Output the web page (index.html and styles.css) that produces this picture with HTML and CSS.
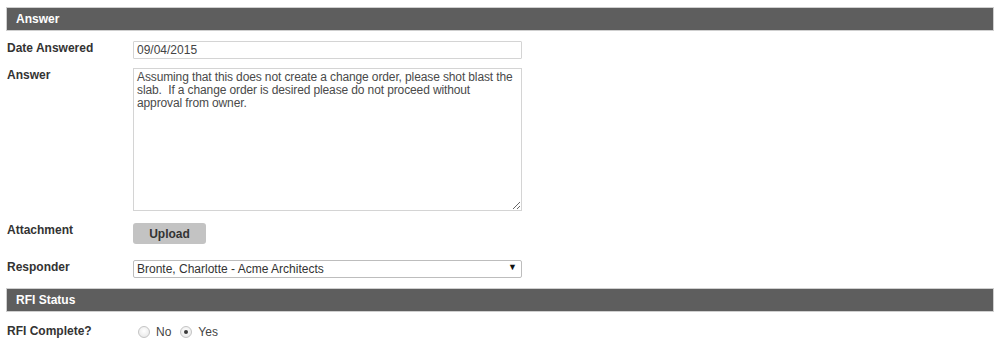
FILE: index.html
```html
<!DOCTYPE html>
<html>
<head>
<meta charset="utf-8">
<link rel="stylesheet" href="styles.css">
</head>
<body>
<div class="page">
  <div class="section-bar">Answer</div>
  <div class="row row-date">
    <label class="lbl">Date Answered</label>
    <input class="field text-input" type="text" value="09/04/2015">
  </div>
  <div class="row row-answer">
    <label class="lbl">Answer</label>
    <textarea class="field answer-box">Assuming that this does not create a change order, please shot blast the slab.  If a change order is desired please do not proceed without approval from owner.</textarea>
  </div>
  <div class="row row-attach">
    <label class="lbl">Attachment</label>
    <button class="upload-btn" type="button">Upload</button>
  </div>
  <div class="row row-responder">
    <label class="lbl">Responder</label>
    <div class="select-wrap">
      <select class="field select-box">
        <option>Bronte, Charlotte - Acme Architects</option>
      </select>
      <span class="select-arrow">▼</span>
    </div>
  </div>
  <div class="section-bar section-rfi">RFI Status</div>
  <div class="row row-complete">
    <label class="lbl">RFI Complete?</label>
    <div class="radios">
      <label class="radio-opt"><input type="radio" name="done" class="radio"> No</label>
      <label class="radio-opt"><input type="radio" name="done" class="radio" checked> Yes</label>
    </div>
  </div>
</div>
</body>
</html>
```

FILE: styles.css
```css
html, body {
  margin: 0;
  padding: 0;
  background: #ffffff;
}

body {
  font-family: "Liberation Sans", Arial, sans-serif;
  font-size: 12px;
  color: #333333;
}

.page {
  padding: 7px 6px 0 6px;
  width: 988px;
}

.section-bar {
  box-sizing: border-box;
  height: 24px;
  background: #5e5e5e;
  border: 1px solid #cfcfcf;
  color: #ffffff;
  font-weight: bold;
  font-size: 12px;
  line-height: 22px;
  padding-left: 9px;
}

.row {
  display: flex;
  align-items: flex-start;
  padding-left: 1px;
}

.lbl {
  width: 126px;
  flex: none;
  font-weight: bold;
  color: #333333;
}

.field {
  box-sizing: border-box;
  width: 389px;
  border: 1px solid #d4d4d4;
  font-family: "Liberation Sans", Arial, sans-serif;
  font-size: 12px;
  color: #444444;
  background: #ffffff;
  margin: 0;
  outline: none;
}

.row-date { margin-top: 10px; }

.text-input {
  height: 18px;
  padding: 0 3px;
  border-radius: 1px;
}

.row-answer { margin-top: 9px; }

.answer-box {
  height: 143px;
  padding: 2px 3px;
  line-height: 13px;
  letter-spacing: -0.12px;
  resize: both;
  color: #4a4a4a;
}

.row-attach { margin-top: 12px; }

.upload-btn {
  width: 73px;
  height: 21px;
  border: none;
  border-radius: 3px;
  background: #c3c3c3;
  color: #333333;
  font-family: "Liberation Sans", Arial, sans-serif;
  font-weight: bold;
  font-size: 12px;
  padding: 0;
  margin: 0;
}

.row-responder { margin-top: 16px; }

.select-wrap {
  position: relative;
  width: 389px;
}

.select-box {
  appearance: none;
  -webkit-appearance: none;
  height: 18px;
  padding: 0 3px;
  border-radius: 2px;
  border-color: #bdbdbd;
  color: #333333;
}

.select-arrow {
  position: absolute;
  right: 5px;
  top: 2px;
  font-size: 9px;
  color: #111111;
  pointer-events: none;
}

.section-rfi {
  margin-top: 10px;
}

.row-complete { margin-top: 12px; }

.radios {
  display: flex;
  gap: 9px;
  padding-left: 5px;
}

.radio-opt {
  display: flex;
  align-items: center;
  gap: 4px;
  color: #444444;
  padding-top: 1px;
}

.radio {
  appearance: none;
  -webkit-appearance: none;
  width: 12px;
  height: 12px;
  margin: 0 2px 0 0;
  border-radius: 50%;
  border: 1px solid #c4c4c4;
  background: radial-gradient(circle at 50% 40%, #ffffff 0%, #ececec 70%, #dcdcdc 100%);
  position: relative;
  box-sizing: border-box;
}

.radio:checked::after {
  content: "";
  position: absolute;
  left: 3px;
  top: 3px;
  width: 4px;
  height: 4px;
  border-radius: 50%;
  background: #3a3a3a;
}
```
